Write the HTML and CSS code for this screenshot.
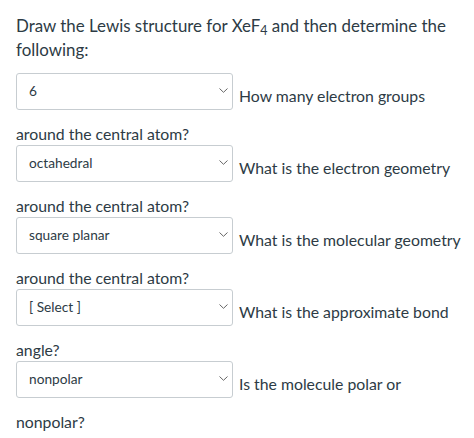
FILE: index.html
```html
<!DOCTYPE html>
<html>
<head>
<meta charset="utf-8">
<link rel="stylesheet" href="styles.css">
</head>
<body>
<div class="question">
  <p class="intro">Draw the Lewis structure for XeF<sub>4</sub> and then determine the following:</p>

  <div class="item">
    <div class="row">
      <div class="select"><span class="value">6</span><svg class="chev" width="9" height="5" viewBox="0 0 9 5"><path d="M0.5 0.5 L4.5 4.3 L8.5 0.5" fill="none" stroke="#666" stroke-width="1"/></svg></div>
      <span class="label">How many electron groups</span>
    </div>
    <div class="cont">around the central atom?</div>
  </div>

  <div class="item">
    <div class="row">
      <div class="select"><span class="value">octahedral</span><svg class="chev" width="9" height="5" viewBox="0 0 9 5"><path d="M0.5 0.5 L4.5 4.3 L8.5 0.5" fill="none" stroke="#666" stroke-width="1"/></svg></div>
      <span class="label">What is the electron geometry</span>
    </div>
    <div class="cont">around the central atom?</div>
  </div>

  <div class="item">
    <div class="row">
      <div class="select"><span class="value">square planar</span><svg class="chev" width="9" height="5" viewBox="0 0 9 5"><path d="M0.5 0.5 L4.5 4.3 L8.5 0.5" fill="none" stroke="#666" stroke-width="1"/></svg></div>
      <span class="label">What is the molecular geometry</span>
    </div>
    <div class="cont">around the central atom?</div>
  </div>

  <div class="item">
    <div class="row">
      <div class="select"><span class="value">[ Select ]</span><svg class="chev" width="9" height="5" viewBox="0 0 9 5"><path d="M0.5 0.5 L4.5 4.3 L8.5 0.5" fill="none" stroke="#666" stroke-width="1"/></svg></div>
      <span class="label">What is the approximate bond</span>
    </div>
    <div class="cont">angle?</div>
  </div>

  <div class="item">
    <div class="row">
      <div class="select"><span class="value">nonpolar</span><svg class="chev" width="9" height="5" viewBox="0 0 9 5"><path d="M0.5 0.5 L4.5 4.3 L8.5 0.5" fill="none" stroke="#666" stroke-width="1"/></svg></div>
      <span class="label">Is the molecule polar or</span>
    </div>
    <div class="cont">nonpolar?</div>
  </div>
</div>
</body>
</html>
```
FILE: styles.css
```css
html, body {
  margin: 0;
  padding: 0;
  background: #ffffff;
}
body {
  font-family: Lato, "Open Sans", sans-serif;
  font-size: 15.8px;
  color: #2d3b45;
}
.question {
  padding: 14px 0 0 16px;
}
.intro {
  margin: 0;
  font-size: 16.9px;
  line-height: 24px;
  width: 440px;
}
.intro sub {
  font-size: 12.5px;
  vertical-align: -3px;
  line-height: 0;
}
.item {
  display: flex;
  flex-direction: column;
}
.intro + .item {
  margin-top: 11px;
}
.row {
  display: flex;
  align-items: flex-start;
}
.select {
  box-sizing: border-box;
  width: 217px;
  height: 37px;
  border: 1px solid #c7cdd1;
  border-radius: 3px;
  display: flex;
  align-items: center;
  justify-content: space-between;
  padding: 0 4px 3px 12px;
  font-size: 13.7px;
}
.chev {
  margin-top: 0;
  display: block;
}
.label {
  margin-left: 6px;
  margin-top: 13px;
  line-height: 20px;
}
.cont {
  margin-top: 13px;
  line-height: 22px;
}
```
